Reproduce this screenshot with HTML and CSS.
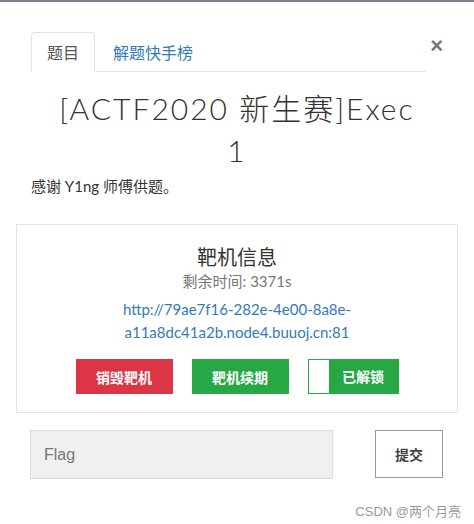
FILE: index.html
```html
<!DOCTYPE html>
<html lang="zh-CN">
<head>
    <meta charset="UTF-8">
    <meta name="viewport" content="width=device-width, initial-scale=1.0">
    <title>[ACTF2020 新生赛]Exec</title>
    <link rel="stylesheet" href="styles.css">
</head>
<body>
    <div class="topbar"></div>
    <div class="modal">
        <div class="modal-header">
            <ul class="nav-tabs">
                <li class="active"><a href="#">题目</a></li>
                <li><a href="#">解题快手榜</a></li>
            </ul>
            <button class="close">&times;</button>
        </div>

        <div class="modal-body">
            <h2 class="challenge-name">[ACTF2020 新生赛]Exec<br>1</h2>
            <p class="challenge-desc">感谢 Y1ng 师傅供题。</p>

            <div class="card">
                <h4>靶机信息</h4>
                <div class="timer">剩余时间: 3371s</div>
                <a class="target-link" href="#">http://79ae7f16-282e-4e00-8a8e-<br>a11a8dc41a2b.node4.buuoj.cn:81</a>
                <div class="actions">
                    <button class="btn btn-danger">销毁靶机</button>
                    <button class="btn btn-success">靶机续期</button>
                    <button class="btn btn-toggle"><span class="knob"></span><span class="label">已解锁</span></button>
                </div>
            </div>

            <div class="submit-row">
                <input type="text" class="flag-input" placeholder="Flag">
                <button class="btn-submit">提交</button>
            </div>
        </div>

        <div class="watermark">CSDN @两个月亮</div>
    </div>
</body>
</html>
```

FILE: styles.css
```css
* {
    box-sizing: border-box;
}
body {
    margin: 0;
    font-family: Lato, "Noto Sans CJK SC", sans-serif;
    color: #333;
    background-color: white;
}
.topbar {
    height: 2px;
    background-color: #7d828e;
}
.modal {
    padding: 0 16px;
}
.modal-header {
    display: flex;
    align-items: flex-start;
    padding: 30px 15px 0;
}
.nav-tabs {
    flex: 1;
    display: flex;
    list-style: none;
    margin: 0;
    padding: 0;
    border-bottom: 1px solid #e2e2e2;
}
.nav-tabs li {
    margin-bottom: -1px;
    margin-right: 2px;
}
.nav-tabs a {
    display: block;
    padding: 0 15px;
    height: 40px;
    line-height: 40px;
    font-size: 16px;
    color: #337ab7;
    text-decoration: none;
    border: 1px solid transparent;
    border-radius: 4px 4px 0 0;
}
.nav-tabs .active a {
    color: #555;
    border-color: #e2e2e2;
    border-bottom-color: white;
    background-color: white;
}
.close {
    margin-left: 4px;
    padding: 0;
    border: none;
    background: none;
    font-size: 22px;
    font-weight: bold;
    line-height: 28px;
    color: #777;
    font-family: "Liberation Sans", sans-serif;
}
.challenge-name {
    margin: 15px 0 0;
    text-align: center;
    font-size: 30px;
    font-weight: 300;
    letter-spacing: 2px;
    line-height: 42px;
    color: #333;
}
.challenge-desc {
    margin: 5px 15px 0;
    font-size: 15px;
    line-height: 20px;
}
.card {
    margin-top: 28px;
    border: 1px solid #e4e4e4;
    padding: 20px 15px 18px;
    text-align: center;
}
.card h4 {
    margin: 0;
    font-size: 20px;
    font-weight: 400;
    line-height: 24px;
    color: #333;
}
.timer {
    margin-top: 1px;
    font-size: 15px;
    line-height: 22px;
    color: #777;
}
.target-link {
    display: block;
    margin-top: 6px;
    font-size: 15px;
    line-height: 23px;
    color: #337ab7;
    text-decoration: none;
}
.actions {
    display: flex;
    justify-content: center;
    gap: 19px;
    margin-top: 15px;
}
.btn {
    height: 35px;
    width: 97px;
    border: 1px solid transparent;
    color: white;
    font-size: 14px;
    font-weight: bold;
    font-family: "Noto Sans CJK SC", sans-serif;
    padding: 0;
}
.btn-danger {
    background-color: #dc3545;
}
.btn-success {
    background-color: #28a745;
}
.btn-toggle {
    display: flex;
    width: 91px;
    background-color: #28a745;
    border-color: #28a745;
}
.btn-toggle .knob {
    width: 20px;
    height: 100%;
    background-color: white;
}
.btn-toggle .label {
    flex: 1;
    line-height: 33px;
}
.submit-row {
    display: flex;
    justify-content: space-between;
    margin-top: 17px;
    padding: 0 15px 0 14px;
}
.flag-input {
    width: 303px;
    height: 49px;
    padding: 0 13px;
    font-size: 16px;
    font-family: "Liberation Sans", sans-serif;
    background-color: #f0f0f0;
    border: 1px solid #dcdcdc;
    color: #555;
}
.flag-input::placeholder {
    color: #777;
}
.btn-submit {
    width: 68px;
    height: 48px;
    background-color: white;
    border: 1px solid #999;
    font-size: 14px;
    font-weight: bold;
    font-family: "Noto Sans CJK SC", sans-serif;
    color: #444;
    padding: 0;
}
.watermark {
    margin-top: 22px;
    margin-right: -3px;
    text-align: right;
    font-size: 13px;
    color: #999;
    font-family: "Liberation Sans", "Noto Sans CJK SC", sans-serif;
}
```
